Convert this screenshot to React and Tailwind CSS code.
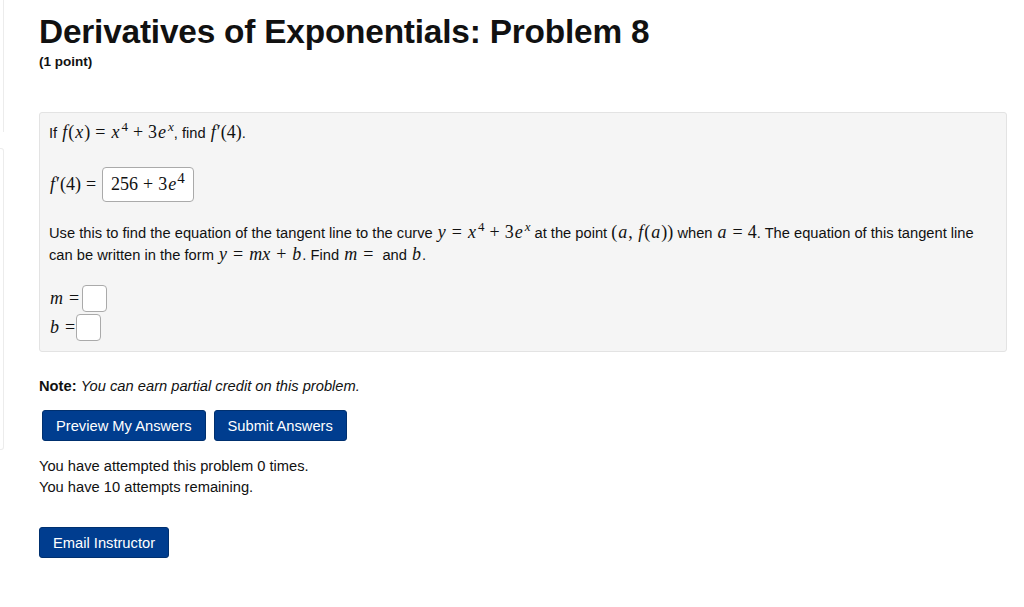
import React from 'react';

const sans = { fontFamily: '"Liberation Sans", Arial, Helvetica, sans-serif' };
const serif = { fontFamily: '"Liberation Serif", "Times New Roman", serif' };

const V = ({ children }) => <i style={serif} className="text-[18px] pl-[1px] pr-[1px]">{children}</i>;
const N = ({ children }) => <span style={serif} className="text-[18px]">{children}</span>;
const Op = ({ children }) => <span style={serif} className="text-[18px] mx-[5px]">{children}</span>;
const Sup = ({ children, italic }) => (
  <span style={serif} className={`relative -top-[7px] text-[13px] leading-none pl-[1px] ${italic ? 'italic' : ''}`}>{children}</span>
);

const AnswerBox = ({ className = '' }) => (
  <span className={`inline-block w-[25px] h-[27px] align-middle bg-white border border-[#aaa] rounded-[4px] ${className}`} />
);

const BlueButton = ({ children, className = '' }) => (
  <button className={`h-[31px] px-[13px] bg-[#003d8f] text-white text-[14.7px] rounded-[3px] border border-[#00306f] ${className}`} style={sans}>
    {children}
  </button>
);

export default function App() {
  return (
    <div className="relative w-[1024px] h-[607px] bg-white text-[#111]" style={sans}>
      {/* faint side edges */}
      <div className="absolute left-0 top-0 w-[4px] h-[132px] border-r border-[#ececec]" />
      <div className="absolute left-0 top-[148px] w-[4px] h-[302px] border-r border-t border-b border-[#ececec] rounded-r-[3px]" />

      <div className="pl-[39px] pt-[13px]">
        <h1 className="text-[33.4px] font-bold leading-[38px] tracking-[-0.2px]">Derivatives of Exponentials: Problem 8</h1>
        <div className="text-[13.5px] font-bold mt-[1px]">(1 point)</div>

        <div className="mt-[40px] w-[968px] h-[240px] bg-[#f5f5f5] border border-[#e3e3e3] rounded-[3px] px-[9px] pt-[9px] text-[14.7px]">
          <p className="leading-[20px]">
            If <V>f</V><N>(</N><V>x</V><N>)</N><Op>=</Op><V>x</V><Sup>4</Sup><Op>+</Op><N>3</N><V>e</V><Sup italic>x</Sup>, find <V>f</V><N>′(4)</N>.
          </p>

          <div className="mt-[24px] flex items-center">
            <V>f</V><N>′(4)</N><Op>=</Op>
            <span className="inline-flex items-center h-[35px] px-[8px] bg-white border border-[#aaa] rounded-[4px] ml-[1px]">
              <N>256</N><Op>+</Op><N>3</N><V>e</V>
              <span style={serif} className="text-[15px] -mt-[14px]">4</span>
            </span>
          </div>

          <p className="mt-[20px] leading-[21px]">
            Use this to find the equation of the tangent line to the curve <V>y</V><Op>=</Op><V>x</V><Sup>4</Sup><Op>+</Op><N>3</N><V>e</V><Sup italic>x</Sup> at the point <N>(</N><V>a</V><N>, </N><V>f</V><N>(</N><V>a</V><N>))</N> when <V>a</V><Op>=</Op><N>4</N>. The equation of this tangent line can be written in the form <V>y</V><Op>=</Op><V>mx</V><Op>+</Op><V>b</V>. Find <V>m</V><Op>=</Op> and <V>b</V>.
          </p>

          <div className="mt-[19px] flex items-center h-[27px]">
            <V>m</V><Op>=</Op><AnswerBox className="-ml-[2px]" />
          </div>
          <div className="mt-[2px] flex items-center h-[27px]">
            <V>b</V><Op>=</Op><AnswerBox className="-ml-[4px]" />
          </div>
        </div>

        <p className="mt-[23px] text-[14.7px]">
          <b>Note:</b> <i>You can earn partial credit on this problem.</i>
        </p>

        <div className="mt-[13px] ml-[3px] flex gap-[8px]">
          <BlueButton>Preview My Answers</BlueButton>
          <BlueButton>Submit Answers</BlueButton>
        </div>

        <div className="mt-[15px] text-[14.7px] leading-[21px]">
          <div>You have attempted this problem 0 times.</div>
          <div>You have 10 attempts remaining.</div>
        </div>

        <div className="mt-[29px]">
          <BlueButton>Email Instructor</BlueButton>
        </div>
      </div>
    </div>
  );
}
